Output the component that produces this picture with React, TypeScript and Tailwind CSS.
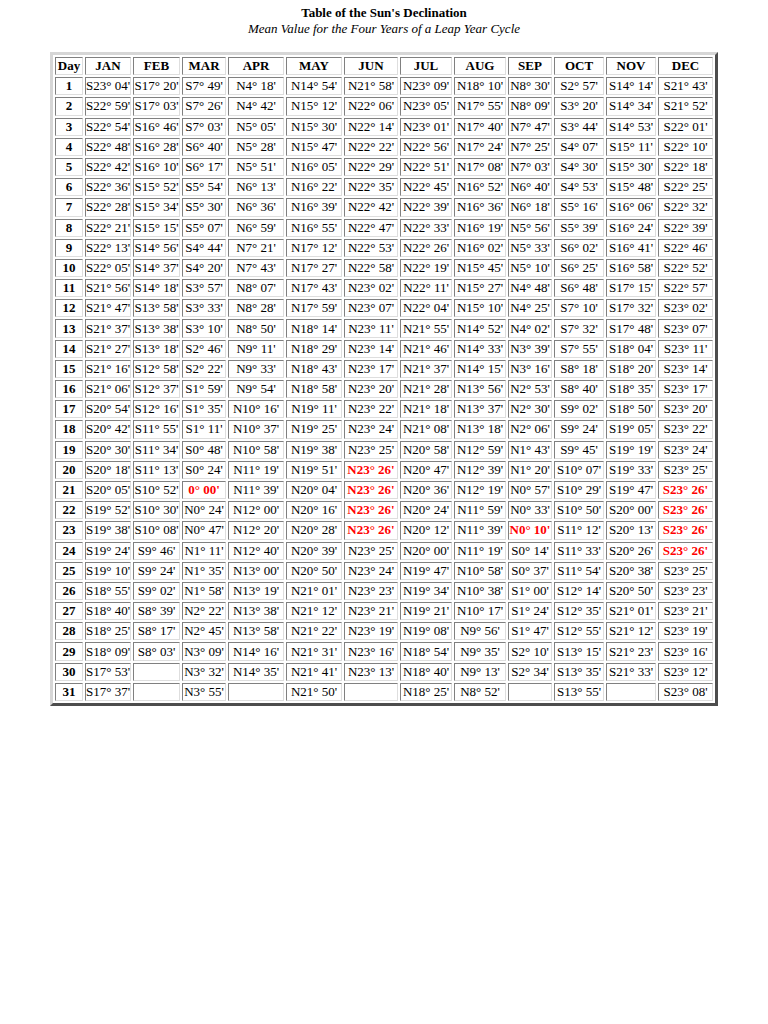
const months = ["JAN", "FEB", "MAR", "APR", "MAY", "JUN", "JUL", "AUG", "SEP", "OCT", "NOV", "DEC"];

// outer cell widths (border included), Day column first
const widths = [
  "w-[28px]", "w-[46px]", "w-[47px]", "w-[44px]", "w-[56px]", "w-[56px]", "w-[54px]",
  "w-[52px]", "w-[52px]", "w-[44px]", "w-[50px]", "w-[50px]", "w-[55px]",
];

// one string per day, "|" between months, "*" marks a red (bold) value
const raw = [
  "S23° 04'|S17° 20'|S7° 49'|N4° 18'|N14° 54'|N21° 58'|N23° 09'|N18° 10'|N8° 30'|S2° 57'|S14° 14'|S21° 43'",
  "S22° 59'|S17° 03'|S7° 26'|N4° 42'|N15° 12'|N22° 06'|N23° 05'|N17° 55'|N8° 09'|S3° 20'|S14° 34'|S21° 52'",
  "S22° 54'|S16° 46'|S7° 03'|N5° 05'|N15° 30'|N22° 14'|N23° 01'|N17° 40'|N7° 47'|S3° 44'|S14° 53'|S22° 01'",
  "S22° 48'|S16° 28'|S6° 40'|N5° 28'|N15° 47'|N22° 22'|N22° 56'|N17° 24'|N7° 25'|S4° 07'|S15° 11'|S22° 10'",
  "S22° 42'|S16° 10'|S6° 17'|N5° 51'|N16° 05'|N22° 29'|N22° 51'|N17° 08'|N7° 03'|S4° 30'|S15° 30'|S22° 18'",
  "S22° 36'|S15° 52'|S5° 54'|N6° 13'|N16° 22'|N22° 35'|N22° 45'|N16° 52'|N6° 40'|S4° 53'|S15° 48'|S22° 25'",
  "S22° 28'|S15° 34'|S5° 30'|N6° 36'|N16° 39'|N22° 42'|N22° 39'|N16° 36'|N6° 18'|S5° 16'|S16° 06'|S22° 32'",
  "S22° 21'|S15° 15'|S5° 07'|N6° 59'|N16° 55'|N22° 47'|N22° 33'|N16° 19'|N5° 56'|S5° 39'|S16° 24'|S22° 39'",
  "S22° 13'|S14° 56'|S4° 44'|N7° 21'|N17° 12'|N22° 53'|N22° 26'|N16° 02'|N5° 33'|S6° 02'|S16° 41'|S22° 46'",
  "S22° 05'|S14° 37'|S4° 20'|N7° 43'|N17° 27'|N22° 58'|N22° 19'|N15° 45'|N5° 10'|S6° 25'|S16° 58'|S22° 52'",
  "S21° 56'|S14° 18'|S3° 57'|N8° 07'|N17° 43'|N23° 02'|N22° 11'|N15° 27'|N4° 48'|S6° 48'|S17° 15'|S22° 57'",
  "S21° 47'|S13° 58'|S3° 33'|N8° 28'|N17° 59'|N23° 07'|N22° 04'|N15° 10'|N4° 25'|S7° 10'|S17° 32'|S23° 02'",
  "S21° 37'|S13° 38'|S3° 10'|N8° 50'|N18° 14'|N23° 11'|N21° 55'|N14° 52'|N4° 02'|S7° 32'|S17° 48'|S23° 07'",
  "S21° 27'|S13° 18'|S2° 46'|N9° 11'|N18° 29'|N23° 14'|N21° 46'|N14° 33'|N3° 39'|S7° 55'|S18° 04'|S23° 11'",
  "S21° 16'|S12° 58'|S2° 22'|N9° 33'|N18° 43'|N23° 17'|N21° 37'|N14° 15'|N3° 16'|S8° 18'|S18° 20'|S23° 14'",
  "S21° 06'|S12° 37'|S1° 59'|N9° 54'|N18° 58'|N23° 20'|N21° 28'|N13° 56'|N2° 53'|S8° 40'|S18° 35'|S23° 17'",
  "S20° 54'|S12° 16'|S1° 35'|N10° 16'|N19° 11'|N23° 22'|N21° 18'|N13° 37'|N2° 30'|S9° 02'|S18° 50'|S23° 20'",
  "S20° 42'|S11° 55'|S1° 11'|N10° 37'|N19° 25'|N23° 24'|N21° 08'|N13° 18'|N2° 06'|S9° 24'|S19° 05'|S23° 22'",
  "S20° 30'|S11° 34'|S0° 48'|N10° 58'|N19° 38'|N23° 25'|N20° 58'|N12° 59'|N1° 43'|S9° 45'|S19° 19'|S23° 24'",
  "S20° 18'|S11° 13'|S0° 24'|N11° 19'|N19° 51'|*N23° 26'|N20° 47'|N12° 39'|N1° 20'|S10° 07'|S19° 33'|S23° 25'",
  "S20° 05'|S10° 52'|*0° 00'|N11° 39'|N20° 04'|*N23° 26'|N20° 36'|N12° 19'|N0° 57'|S10° 29'|S19° 47'|*S23° 26'",
  "S19° 52'|S10° 30'|N0° 24'|N12° 00'|N20° 16'|*N23° 26'|N20° 24'|N11° 59'|N0° 33'|S10° 50'|S20° 00'|*S23° 26'",
  "S19° 38'|S10° 08'|N0° 47'|N12° 20'|N20° 28'|*N23° 26'|N20° 12'|N11° 39'|*N0° 10'|S11° 12'|S20° 13'|*S23° 26'",
  "S19° 24'|S9° 46'|N1° 11'|N12° 40'|N20° 39'|N23° 25'|N20° 00'|N11° 19'|S0° 14'|S11° 33'|S20° 26'|*S23° 26'",
  "S19° 10'|S9° 24'|N1° 35'|N13° 00'|N20° 50'|N23° 24'|N19° 47'|N10° 58'|S0° 37'|S11° 54'|S20° 38'|S23° 25'",
  "S18° 55'|S9° 02'|N1° 58'|N13° 19'|N21° 01'|N23° 23'|N19° 34'|N10° 38'|S1° 00'|S12° 14'|S20° 50'|S23° 23'",
  "S18° 40'|S8° 39'|N2° 22'|N13° 38'|N21° 12'|N23° 21'|N19° 21'|N10° 17'|S1° 24'|S12° 35'|S21° 01'|S23° 21'",
  "S18° 25'|S8° 17'|N2° 45'|N13° 58'|N21° 22'|N23° 19'|N19° 08'|N9° 56'|S1° 47'|S12° 55'|S21° 12'|S23° 19'",
  "S18° 09'|S8° 03'|N3° 09'|N14° 16'|N21° 31'|N23° 16'|N18° 54'|N9° 35'|S2° 10'|S13° 15'|S21° 23'|S23° 16'",
  "S17° 53'||N3° 32'|N14° 35'|N21° 41'|N23° 13'|N18° 40'|N9° 13'|S2° 34'|S13° 35'|S21° 33'|S23° 12'",
  "S17° 37'||N3° 55'||N21° 50'||N18° 25'|N8° 52'||S13° 55'||S23° 08'",
];

const rows = raw.map((line) => line.split("|"));

const cell =
  "h-[18.2px] p-0 text-center align-middle whitespace-nowrap leading-[16px] border border-solid border-t-[#808080] border-l-[#808080] border-r-[#dedede] border-b-[#dedede]";

const App = () => {
  return (
    <div className="min-h-[1024px] bg-white pt-[5px] text-[13px] text-black font-['Liberation_Serif',serif]">
      <div className="text-center leading-[16px]">
        <div className="font-bold">Table of the Sun's Declination</div>
        <div className="italic">Mean Value for the Four Years of a Leap Year Cycle</div>
      </div>

      <table className="mx-auto mt-[15px] w-[668px] table-fixed border-separate border-spacing-[2px] border-[3px] border-solid border-t-[#d6d6d6] border-l-[#d6d6d6] border-r-[#4d4d4d] border-b-[#4d4d4d]">
        <thead>
          <tr>
            <th className={`${cell} ${widths[0]} font-bold`}>Day</th>
            {months.map((m, i) => (
              <th key={m} className={`${cell} ${widths[i + 1]} font-bold`}>
                {m}
              </th>
            ))}
          </tr>
        </thead>
        <tbody>
          {rows.map((values, d) => (
            <tr key={d}>
              <td className={`${cell} font-bold`}>{d + 1}</td>
              {values.map((v, i) => {
                const red = v.startsWith("*");
                return (
                  <td key={i} className={red ? `${cell} font-bold text-[#ff0000]` : cell}>
                    {red ? v.slice(1) : v}
                  </td>
                );
              })}
            </tr>
          ))}
        </tbody>
      </table>
    </div>
  );
};

export default App;
